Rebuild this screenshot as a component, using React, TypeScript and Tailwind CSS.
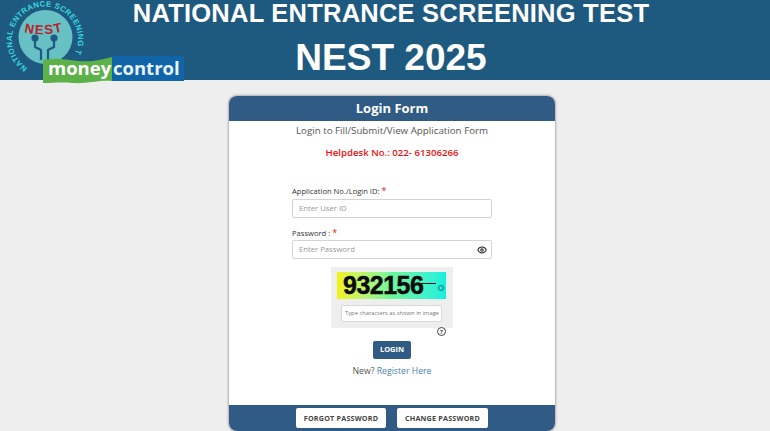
import { Eye } from "lucide-react";

function NestLogo() {
  return (
    <svg viewBox="0 0 90 80" className="absolute left-0 top-0 h-[80px] w-[90px]">
      <circle cx="45.5" cy="37" r="27" fill="#67c0c4" />
      <defs>
        <path id="nest-ring" d="M 27.5 67.5 A 33 33 0 1 1 70.3 60.7" />
        <path id="nest-word" d="M 24 32 Q 44 37 64 31" />
      </defs>
      <text fontFamily="'Liberation Sans', sans-serif" fontWeight="700" fontSize="7.8" fill="#3ad6de">
        <textPath href="#nest-ring" textLength="151">NATIONAL ENTRANCE SCREENING T</textPath>
      </text>
      <text fontFamily="'Liberation Sans', sans-serif" fontWeight="700" fontSize="13" fill="#bb2029">
        <textPath href="#nest-word" textLength="39">NEST</textPath>
      </text>
      <g stroke="#1d5a80" strokeWidth="2.2" fill="none">
        <path d="M35 38 V47 L41 50 V60" />
        <path d="M54 38 V47 L48 50 V60" />
      </g>
      <circle cx="35" cy="38" r="3.6" fill="#1d5a80" />
      <circle cx="54" cy="38" r="3.6" fill="#1d5a80" />
    </svg>
  );
}

function MoneycontrolLogo() {
  return (
    <div className="absolute left-[43px] top-[56px] h-[28px] w-[141px] font-['Open_Sans',sans-serif] text-[18.5px] font-bold leading-none">
      <svg viewBox="0 0 141 28" className="absolute inset-0 h-full w-full">
        <rect x="69" y="0" width="72" height="25" fill="#0f65a8" />
        <path d="M0 4 C 20 0 30 7 50 5 C 58 4 64 2 69 1 V 25 C 55 24 45 28 30 27 C 18 26 10 27 0 27 Z" fill="#5db149" />
      </svg>
      <div className="absolute left-[5px] top-[3px] text-white">money</div>
      <div className="absolute left-[70px] top-[3px] text-[#e8f2f8]">control</div>
    </div>
  );
}

function Captcha() {
  return (
    <div className="ml-[102px] mt-[8px] h-[61px] w-[122px] bg-[#eeeeee] px-[6px] pt-[5px]">
      <div className="relative flex h-[27px] w-[109px] items-center bg-gradient-to-r from-[#f2f20a] via-[#6cf79a] to-[#0bf0e0] pl-[6px] font-['Liberation_Sans',sans-serif] text-[25px] font-bold leading-none tracking-[-0.5px] text-[#0b0b0b] [-webkit-text-stroke:0.5px_#0b0b0b]">
        932156
        <span className="absolute left-[78px] top-[11px] h-[1px] w-[21px] bg-[#111]" />
        <span className="absolute left-[101px] top-[13px] h-[6px] w-[6px] rounded-full border border-[#1a6b70]" />
      </div>
      <div className="ml-[4px] mt-[6px] flex h-[17px] w-[101px] items-center whitespace-nowrap rounded-[2px] border border-[#d8d8d8] bg-white pl-[3px] text-[5.8px] text-[#777]">
        Type characters as shown in image
      </div>
    </div>
  );
}

export default function App() {
  return (
    <div className="h-[431px] w-[770px] overflow-hidden bg-[#eeeeee] font-['Open_Sans',sans-serif]">
      <header className="relative h-[80px] bg-[#1e5a80] font-['Liberation_Sans',sans-serif] font-bold text-white">
        <NestLogo />
        <MoneycontrolLogo />
        <div className="pl-[12px] text-center">
          <div className="text-[25.5px] leading-[26px] tracking-[0.23px]">NATIONAL ENTRANCE SCREENING TEST</div>
          <div className="mt-[11px] text-[37px] leading-[42px]">NEST 2025</div>
        </div>
      </header>

      <main className="ml-[229px] mt-[16px] w-[326px] overflow-hidden rounded-[8px] bg-white shadow-[0_0_3px_rgba(0,0,0,0.55)]">
        <div className="flex h-[25px] items-center justify-center bg-[#2f5b85] text-[13px] font-bold text-white">Login Form</div>
        <p className="mt-[3px] text-center text-[9.75px] leading-[14px] text-[#555]">Login to Fill/Submit/View Application Form</p>
        <p className="mt-[8px] text-center text-[9.65px] font-semibold leading-[14px] text-[#f00f0f]">Helpdesk No.: 022- 61306266</p>

        <form className="mt-[25px] px-[63px]">
          <label className="block text-[7.6px] leading-[12px] text-[#333]">
            Application No./Login ID: <span className="text-[9px] leading-[8px] text-[#e01010]">*</span>
          </label>
          <div className="mt-[2px] flex h-[19px] w-[200px] items-center rounded-[2px] border border-[#d4d4d4] px-[6px] text-[7.7px] text-[#999]">Enter User ID</div>
          <label className="mt-[9px] block text-[7.6px] leading-[12px] text-[#333]">
            Password : <span className="text-[9px] leading-[8px] text-[#e01010]">*</span>
          </label>
          <div className="mt-[1px] flex h-[19px] w-[200px] items-center justify-between rounded-[2px] border border-[#d4d4d4] pl-[6px] pr-[4px] text-[7.7px] text-[#999]">
            Enter Password
            <Eye className="h-[10px] w-[10px] text-[#222]" strokeWidth={2.5} />
          </div>
        </form>

        <div>
          <Captcha />
          <div className="ml-[208px] mt-[-1px] flex h-[9px] w-[9px] items-center justify-center rounded-full border border-[#444] text-[6px] font-bold leading-none text-[#444]">?</div>
        </div>

        <div className="mt-[5px] flex justify-center">
          <div className="flex h-[18px] w-[38px] items-center justify-center rounded-[2px] bg-[#2f5b85] text-[7.5px] font-bold text-white">LOGIN</div>
        </div>
        <p className="mt-[6px] text-center text-[8.7px] leading-[13px] text-[#555]">
          New? <span className="text-[#4a7fb0]">Register Here</span>
        </p>

        <div className="mt-[27px] flex h-[26px] items-start justify-center gap-[11px] bg-[#2f5b85] pt-[3px]">
          <div className="flex h-[20px] w-[90px] items-center justify-center rounded-[2px] bg-white text-[7.2px] font-bold tracking-[0.2px] text-[#444]">FORGOT PASSWORD</div>
          <div className="flex h-[20px] w-[91px] items-center justify-center rounded-[2px] bg-white text-[7.2px] font-bold tracking-[0.2px] text-[#444]">CHANGE PASSWORD</div>
        </div>
      </main>
    </div>
  );
}
